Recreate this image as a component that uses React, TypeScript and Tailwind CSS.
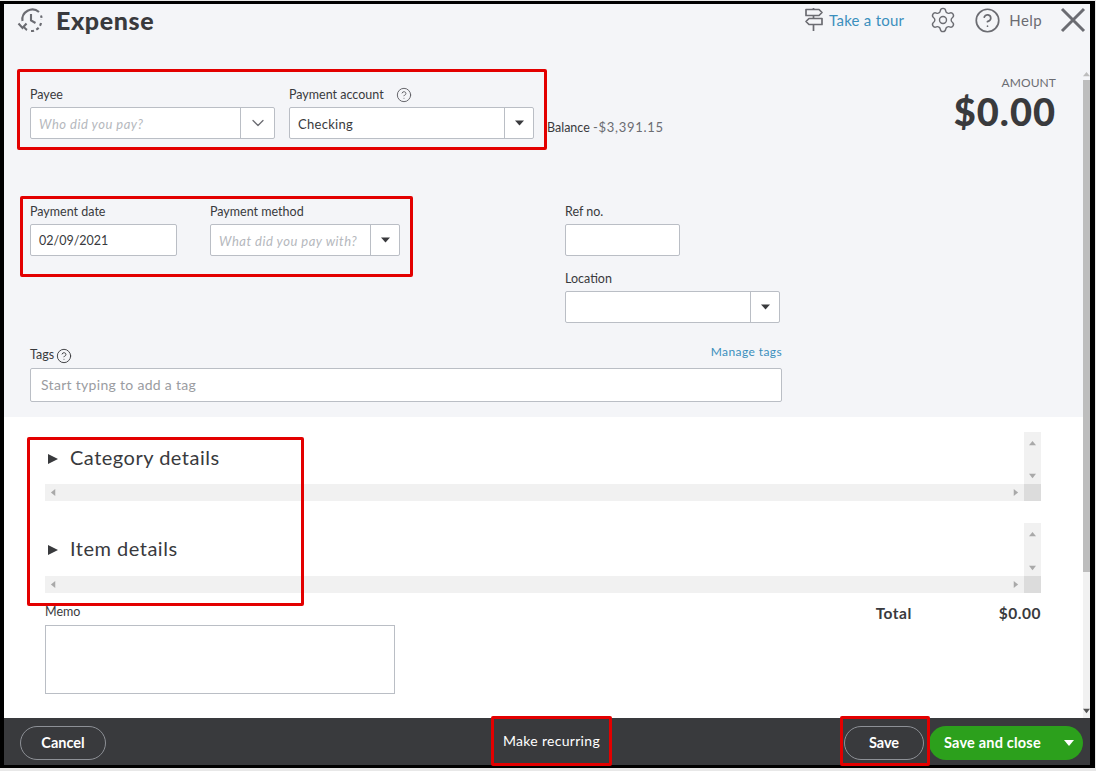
import { ChevronDown, CircleHelp, Settings } from "lucide-react";
import type { ReactNode } from "react";

function Caret() {
  return (
    <svg width="9" height="6" viewBox="0 0 9 6">
      <path d="M0 0.5H9L4.5 5.5Z" fill="#393a3d" />
    </svg>
  );
}

function Tri({ dir, color = "#a9a9a9", size = 7 }: { dir: "up" | "down" | "left" | "right"; color?: string; size?: number }) {
  const d = { up: "M0 6H8L4 1Z", down: "M0 2H8L4 7Z", left: "M6 0V8L1 4Z", right: "M2 0V8L7 4Z" }[dir];
  return (
    <svg width={size} height={size} viewBox="0 0 8 8">
      <path d={d} fill={color} />
    </svg>
  );
}

function Field({ label, className = "", children }: { label: ReactNode; className?: string; children: ReactNode }) {
  return (
    <div className={className}>
      <div className="h-[21px] text-[12.5px] leading-[17px] text-[#393a3d] whitespace-nowrap">{label}</div>
      {children}
    </div>
  );
}

function Combo({ placeholder, value, wide, chevron }: { placeholder?: string; value?: string; wide: string; chevron?: boolean }) {
  return (
    <div className={`flex h-[32px] bg-white border border-[#babec5] rounded-[2px] ${wide}`}>
      <div className={`flex-1 min-w-0 px-2 pt-[3px] flex items-center text-[13px] whitespace-nowrap ${placeholder ? "italic tracking-[0.5px] text-[#b5b8bd]" : "tracking-[0.3px] text-[#393a3d]"}`}>
        {placeholder ?? value}
      </div>
      <div className={`shrink-0 border-l border-[#babec5] flex items-center justify-center ${chevron ? "w-[34px]" : "w-[29px]"}`}>
        {chevron ? <ChevronDown size={20} strokeWidth={1.5} color="#6b6c72" /> : <Caret />}
      </div>
    </div>
  );
}

function DetailSection({ title, gridHeight }: { title: string; gridHeight: string }) {
  return (
    <div>
      <div className={`flex ${gridHeight}`}>
        <div className="flex-1 flex items-start pl-[3px] pt-[12px]">
          <svg width="10" height="10" viewBox="0 0 10 10" className="mt-[10px]">
            <path d="M0 0L10 5L0 10Z" fill="#393a3d" />
          </svg>
          <span className="ml-[12px] text-[20px] leading-[26px] tracking-[0.5px] text-[#393a3d]">{title}</span>
        </div>
        <div className="w-[17px] bg-[#f1f1f1] flex flex-col items-center justify-between pt-[8px] pb-[5px]">
          <Tri dir="up" />
          <Tri dir="down" />
        </div>
      </div>
      <div className="flex h-[17px]">
        <div className="flex-1 bg-[#f1f1f1] flex items-center justify-between px-[5px]">
          <Tri dir="left" />
          <Tri dir="right" />
        </div>
        <div className="w-[17px] bg-[#dcdcdc]" />
      </div>
    </div>
  );
}

export default function App() {
  return (
    <div className="relative w-[1096px] h-[771px] bg-[#e8e8e8] overflow-hidden font-['Lato','Liberation_Sans',sans-serif] pt-px pr-px pb-[3px]">
      <div className="w-full h-full border-black border-l-[4px] border-r-[5px] border-t-[3px] border-b-[3px] flex flex-col">
        {/* Top form area */}
        <div className="h-[413px] shrink-0 bg-[#f4f5f8] pl-[26px]">
          <div className="flex items-center h-[32px] -ml-[13px] pr-[4px]">
            <svg width="28" height="28" viewBox="0 0 28 28" fill="none" stroke="#6b6c72" strokeWidth="2.1" className="shrink-0">
              <path d="M5.5 15A10 10 0 0 1 22 6" />
              <path d="M24 9.5A10 10 0 0 1 24.5 14" strokeDasharray="2.5 2" />
              <path d="M24 17A10 10 0 0 1 13 25" strokeDasharray="3 2.4" />
              <path d="M10 24A10 10 0 0 1 7 21" />
              <path d="M1.5 17.5L5.5 22L9.5 17.5" />
              <path d="M14 8V14.5L18.5 17" />
            </svg>
            <span className="ml-[11px] text-[25px] font-black tracking-[0.6px] text-[#393a3d] leading-none">Expense</span>
            <div className="ml-auto flex items-center">
              <svg width="24" height="26" viewBox="0 0 24 26" fill="none" stroke="#6b6c72" strokeWidth="1.7" strokeLinejoin="round">
                <path d="M4 2.5H17L20 5.5L17 8.5H4Z" />
                <path d="M20 11.5H7L4 14.5L7 17.5H20Z" />
                <path d="M11.5 1V2.5M11.5 8.5V11.5M11.5 17.5V24" />
              </svg>
              <span className="ml-[3px] text-[15px] tracking-[0.25px] text-[#3b8fbd]">Take a tour</span>
              <Settings size={28} strokeWidth={1.2} color="#6b6c72" className="ml-[25px]" />
              <CircleHelp size={27} strokeWidth={1.5} color="#6b6c72" className="ml-[17px]" />
              <span className="ml-[8px] text-[15px] tracking-[0.4px] text-[#6b6c72]">Help</span>
              <svg width="26" height="26" viewBox="0 0 26 26" stroke="#6b6c72" strokeWidth="3" className="ml-[18px]">
                <path d="M2 2L24 24M24 2L2 24" />
              </svg>
            </div>
          </div>

          <div className="flex mt-[50px] pr-[34px]">
            <Field label="Payee" className="w-[245px]">
              <Combo placeholder="Who did you pay?" wide="w-full" chevron />
            </Field>
            <Field
              label={
                <span className="flex items-center">
                  Payment account
                  <CircleHelp size={16} strokeWidth={1.4} color="#5c5d62" className="ml-[12px]" />
                </span>
              }
              className="ml-[14px] w-[245px]"
            >
              <Combo value="Checking" wide="w-full" />
            </Field>
            <div className="ml-[13px] mt-[33px] text-[12.5px] leading-[16px] whitespace-nowrap text-[#393a3d]">
              Balance <span className="text-[#6b6c72] text-[13px] tracking-[0.7px]">-$3,391.15</span>
            </div>
            <div className="ml-auto text-right -mt-[10px]">
              <div className="text-[12px] tracking-[0.1px] leading-[14px] text-[#6b6c72]">AMOUNT</div>
              <div className="text-[38px] leading-[42px] font-black tracking-[1px] text-[#393a3d]">$0.00</div>
            </div>
          </div>

          <div className="flex mt-[64px]">
            <Field label="Payment date" className="w-[147px]">
              <div className="h-[32px] bg-white border border-[#babec5] rounded-[2px] px-2 pt-[3px] flex items-center text-[12.5px] text-[#393a3d]">02/09/2021</div>
            </Field>
            <Field label="Payment method" className="ml-[33px] w-[190px]">
              <Combo placeholder="What did you pay with?" wide="w-full" />
            </Field>
            <div className="ml-[165px]">
              <Field label="Ref no.">
                <div className="h-[32px] w-[115px] bg-white border border-[#babec5] rounded-[2px]" />
              </Field>
              <Field label="Location" className="mt-[14px]">
                <Combo value="" wide="w-[215px]" />
              </Field>
            </div>
          </div>

          <div className="w-[752px] mt-[20px]">
            <div className="flex items-center justify-between h-[25px]">
              <span className="flex items-center text-[12.5px] text-[#393a3d]">
                Tags
                <CircleHelp size={16} strokeWidth={1.4} color="#393a3d" className="ml-[2px]" />
              </span>
              <span className="text-[12px] tracking-[0.4px] text-[#3b8fbd] -mt-[8px]">Manage tags</span>
            </div>
            <div className="h-[34px] bg-white border border-[#babec5] rounded-[2px] px-[10px] pb-[2px] flex items-center text-[14px] tracking-[0.3px] text-[#9a9ca1]">
              Start typing to add a tag
            </div>
          </div>
        </div>

        {/* White area */}
        <div className="flex-1 min-h-0 bg-white pl-[41px] pr-[49px] pt-[15px]">
          <DetailSection title="Category details" gridHeight="h-[52px]" />
          <div className="mt-[22px]">
            <DetailSection title="Item details" gridHeight="h-[53px]" />
          </div>
          <div className="flex justify-between mt-[10px] h-[20px] items-start">
            <span className="mt-px text-[12.5px] leading-[16px] text-[#393a3d]">Memo</span>
            <div className="flex mt-px text-[15.5px] leading-[18px] font-bold tracking-[0.5px] text-[#393a3d]">
              <span>Total</span>
              <span className="ml-[87px]">$0.00</span>
            </div>
          </div>
          <div className="w-[350px] h-[69px] mt-[2px] bg-white border border-[#babec5]" />
        </div>

        {/* Footer */}
        <div className="h-[47px] shrink-0 bg-[#393a3d] flex items-center pt-[2px] pl-[16px] pr-[7px] text-[14.5px] font-bold text-white">
          <button className="w-[86px] h-[34px] rounded-full border border-[#8d9096] font-bold">Cancel</button>
          <span className="ml-[397px] -mt-[4px] font-normal text-[14px] tracking-[0.3px]">Make recurring</span>
          <button className="ml-[244px] w-[80px] h-[34px] rounded-full border border-[#8d9096] font-bold">Save</button>
          <div className="ml-[5px] w-[154px] h-[34px] rounded-full bg-[#2ca01c] flex items-center pl-[15px] pr-[9px]">
            <span className="font-bold tracking-[0.2px]">Save and close</span>
            <svg width="10" height="6" viewBox="0 0 10 6" className="ml-auto"><path d="M0 0H10L5 6Z" fill="#fff" /></svg>
          </div>
        </div>
      </div>

      {/* Page scrollbar overlay */}
      <div className="absolute left-[1083px] top-[80px] w-[7px] h-[492px] bg-[#bdbdbd]" />
      <div className="absolute left-[1083px] top-[572px] w-[7px] h-[146px] bg-[#f1f1f1]" />
      <div className="absolute left-[1083px] top-[68px] w-[7px] h-[12px] flex items-center justify-center"><Tri dir="up" color="#bdbdbd" /></div>
      <div className="absolute left-[1083px] top-[704px] w-[7px] h-[12px] flex items-center justify-center"><Tri dir="down" color="#555" /></div>

      {/* Red annotations */}
      <div className="absolute left-[17px] top-[69px] w-[530px] h-[81px] border-[3px] border-[#e30000] rounded-[2px]" />
      <div className="absolute left-[20px] top-[196px] w-[393px] h-[81px] border-[3px] border-[#e30000] rounded-[2px]" />
      <div className="absolute left-[27px] top-[437px] w-[277px] h-[169px] border-[3px] border-[#e30000] rounded-[2px]" />
      <div className="absolute left-[491px] top-[716px] w-[121px] h-[50px] border-[3px] border-[#e30000] rounded-[2px]" />
      <div className="absolute left-[840px] top-[716px] w-[90px] h-[50px] border-[3px] border-[#e30000] rounded-[2px]" />
    </div>
  );
}
